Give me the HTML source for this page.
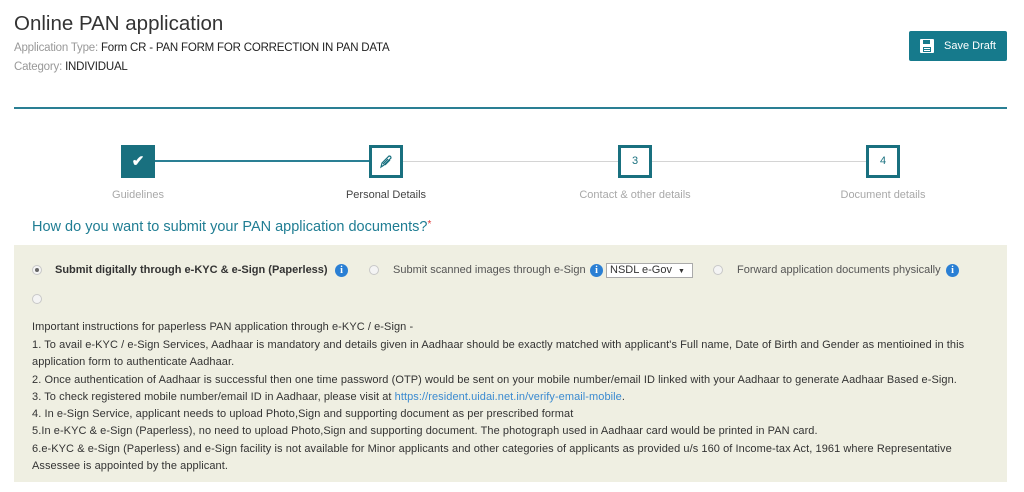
<!DOCTYPE html>
<html><head><meta charset="utf-8"><style>
*{margin:0;padding:0;box-sizing:border-box}
body{width:1024px;height:492px;background:#fff;font-family:"Liberation Sans",Arial,sans-serif;position:relative;overflow:hidden;color:#333}
.a{position:absolute;white-space:nowrap}
h1{position:absolute;left:14px;top:12px;font-size:20.5px;font-weight:normal;color:#333}
.sub{font-size:11.5px;color:#999;letter-spacing:-0.2px}
.sub b{font-weight:normal;color:#222}
.btn{position:absolute;left:909px;top:31px;width:98px;height:30px;background:#167a8c;border-radius:2px;color:#fff;font-size:11px}
.hr{position:absolute;left:14px;top:107px;width:993px;height:2px;background:#2a7f94}
.box{position:absolute;top:145px;width:34px;height:33px;border:3px solid #19707f;background:#fff;color:#19707f;font-size:11px;text-align:center;line-height:27px}
.lbl{position:absolute;top:189px;font-size:11px;color:#a8a8a8;transform:translateX(-50%)}
.panel{position:absolute;left:14px;top:245px;width:993px;height:237px;background:#efefe2}
.r{position:absolute;width:10px;height:10px;border-radius:50%;border:1px solid #c8c8c8;background:#f4f4f4}
.i{position:absolute;width:13px;height:13px;border-radius:50%;background:#2a7fd4;color:#fff;font-size:10px;font-weight:bold;text-align:center;line-height:13px;font-family:"Liberation Serif",serif}
.t{position:absolute;left:32px;font-size:11px;color:#333;white-space:nowrap;letter-spacing:0.07px}
</style></head><body>
<h1>Online PAN application</h1>
<div class="a sub" style="left:14px;top:42px">Application Type: <b>Form CR - PAN FORM FOR CORRECTION IN PAN DATA</b></div>
<div class="a sub" style="left:14px;top:61px">Category: <b>INDIVIDUAL</b></div>
<div class="btn"><svg class="a" style="left:11px;top:8px" width="14" height="14" viewBox="0 0 14 14"><rect x="0" y="0" width="14" height="14" rx="1" fill="#fff"/><rect x="3" y="1" width="7" height="4" fill="#167a8c"/><rect x="3" y="8" width="8" height="5" fill="#167a8c"/><rect x="4" y="9" width="6" height="1" fill="#fff"/><rect x="4" y="11" width="6" height="1" fill="#fff"/></svg><span class="a" style="left:35px;top:9px">Save Draft</span></div>
<div class="hr"></div>
<div class="a" style="left:155px;top:160px;width:214px;height:2px;background:#2a7f94"></div>
<div class="a" style="left:403px;top:161px;width:216px;height:1px;background:#d4d4d4"></div>
<div class="a" style="left:651px;top:161px;width:215px;height:1px;background:#d4d4d4"></div>
<div class="box" style="left:121px;background:#19707f;color:#fff;font-size:15px;font-weight:bold">✔</div>
<div class="box" style="left:369px"><svg width="16" height="16" viewBox="0 0 16 16" style="margin-top:6px"><path d="M3 13 L4 9 L11 2 Q13 2 13 4 L6 11 Z M5 10 L10 5 M7 11 L12 6" stroke="#19707f" stroke-width="1.2" fill="none"/></svg></div>
<div class="box" style="left:618px">3</div>
<div class="box" style="left:866px">4</div>
<div class="lbl" style="left:138px">Guidelines</div>
<div class="lbl" style="left:386px;color:#444">Personal Details</div>
<div class="lbl" style="left:635px">Contact &amp; other details</div>
<div class="lbl" style="left:883px">Document details</div>
<div class="a" style="left:32px;top:219px;font-size:14.5px;color:#1f7d93">How do you want to submit your PAN application documents?<span style="color:#d33;font-size:10px;vertical-align:top">*</span></div>
<div class="panel"></div>
<div class="r" style="left:32px;top:265px"><div style="width:4px;height:4px;border-radius:50%;background:#666;margin:2px"></div></div>
<div class="a" style="left:55px;top:264px;font-size:11px;font-weight:bold;color:#333">Submit digitally through e-KYC &amp; e-Sign (Paperless)</div>
<div class="i" style="left:335px;top:264px">i</div>
<div class="r" style="left:369px;top:265px"></div>
<div class="a" style="left:393px;top:264px;font-size:11px;color:#555">Submit scanned images through e-Sign</div>
<div class="i" style="left:590px;top:264px">i</div>
<div class="a" style="left:606px;top:263px;width:87px;height:15px;border:1px solid #aaa;background:#fff;font-size:11px;padding-left:3px;line-height:13px;color:#333">NSDL e-Gov <span style="font-size:7px;margin-left:3px">▼</span></div>
<div class="r" style="left:713px;top:265px"></div>
<div class="a" style="left:737px;top:264px;font-size:11px;color:#555">Forward application documents physically</div>
<div class="i" style="left:946px;top:264px">i</div>
<div class="r" style="left:32px;top:294px"></div>
<div class="t" style="top:321px">Important instructions for paperless PAN application through e-KYC / e-Sign -</div>
<div class="t" style="top:339px">1. To avail e-KYC / e-Sign Services, Aadhaar is mandatory and details given in Aadhaar should be exactly matched with applicant's Full name, Date of Birth and Gender as mentioined in this</div>
<div class="t" style="top:356px">application form to authenticate Aadhaar.</div>
<div class="t" style="top:374px">2. Once authentication of Aadhaar is successful then one time password (OTP) would be sent on your mobile number/email ID linked with your Aadhaar to generate Aadhaar Based e-Sign.</div>
<div class="t" style="top:391px">3. To check registered mobile number/email ID in Aadhaar, please visit at <span style="color:#3a8ad0">https://resident.uidai.net.in/verify-email-mobile</span>.</div>
<div class="t" style="top:408px">4. In e-Sign Service, applicant needs to upload Photo,Sign and supporting document as per prescribed format</div>
<div class="t" style="top:425px">5.In e-KYC &amp; e-Sign (Paperless), no need to upload Photo,Sign and supporting document. The photograph used in Aadhaar card would be printed in PAN card.</div>
<div class="t" style="top:443px">6.e-KYC &amp; e-Sign (Paperless) and e-Sign facility is not available for Minor applicants and other categories of applicants as provided u/s 160 of Income-tax Act, 1961 where Representative</div>
<div class="t" style="top:460px">Assessee is appointed by the applicant.</div>
</body></html>
